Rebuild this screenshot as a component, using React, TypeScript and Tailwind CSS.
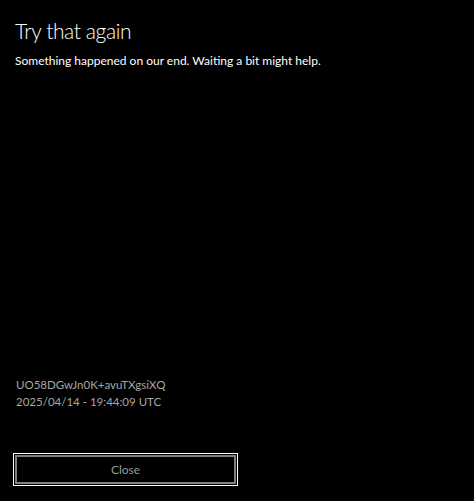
export default function App() {
  return (
    <div
      className="w-[474px] h-[501px] bg-black flex flex-col overflow-hidden"
      style={{ fontFamily: 'Lato, "Open Sans", sans-serif' }}
    >
      <div className="pl-[15px] pt-[17px]">
        <h1 className="text-[21px] leading-[28px] font-light text-white tracking-[-0.4px]">Try that again</h1>
        <p className="mt-[8px] text-[12px] leading-[16px] text-white">
          Something happened on our end. Waiting a bit might help.
        </p>
      </div>
      <div className="flex-1" />
      <div className="pl-[16px] text-[11.5px] leading-[17px] text-[#a6a6a6]">
        <div>UO58DGwJn0K+avuTXgsiXQ</div>
        <div>2025/04/14 - 19:44:09 UTC</div>
      </div>
      <div className="pl-[13px] mt-[43px] mb-[15px]">
        <div className="w-[225px] h-[33px] border border-white p-px">
          <div className="w-full h-full border-2 border-[#808080] flex items-center justify-center text-[12px] text-[#9a9a9a]">
            Close
          </div>
        </div>
      </div>
    </div>
  );
}
